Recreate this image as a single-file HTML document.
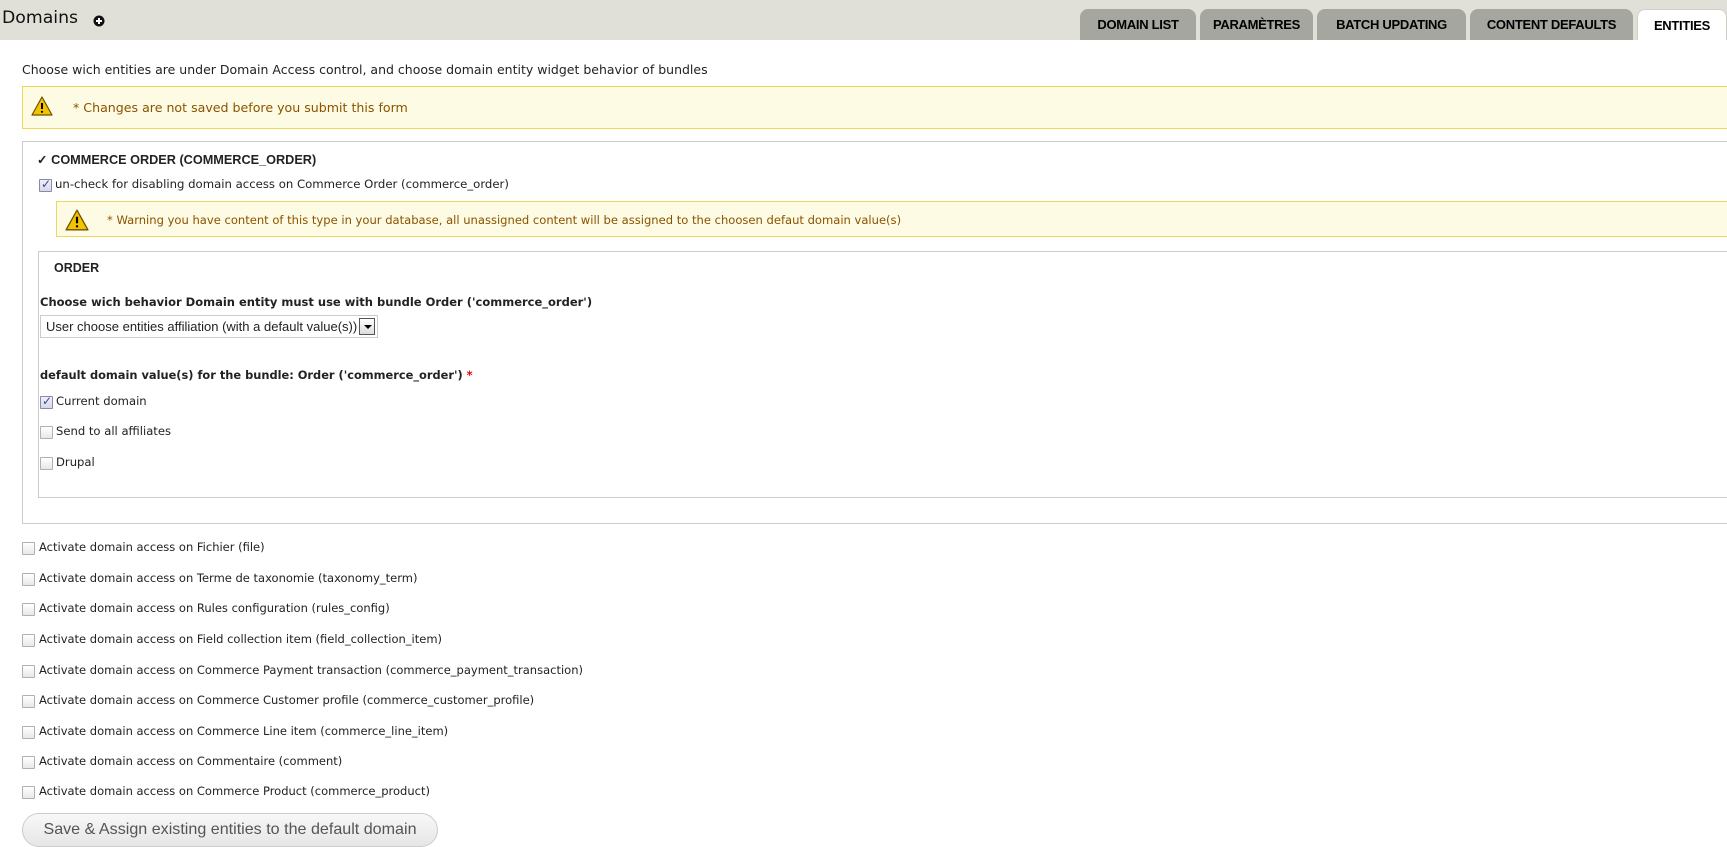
<!DOCTYPE html>
<html><head><meta charset="utf-8"><style>
*{box-sizing:border-box;margin:0;padding:0}
body{width:1727px;height:841px;overflow:hidden;background:#fff;font-family:"DejaVu Sans","Liberation Sans",sans-serif;font-size:11.5px;color:#222;position:relative}
.a{position:absolute;white-space:nowrap}
.hdr{position:absolute;left:0;top:0;width:1727px;height:40px;background:#e0e0d8}
.tab{position:absolute;top:9px;height:31px;background:#a6a6a0;border-radius:8px 8px 0 0;font-family:"Liberation Sans",sans-serif;font-weight:bold;font-size:13px;color:#000;text-align:center;line-height:32px;letter-spacing:-0.3px}
.tab.on{background:#fff}
.warn{position:absolute;background:#fdfbe3;border:1px solid #ecd85a;color:#8a5300}
.cb{position:absolute;width:13px;height:13px;border:1px solid #b0b0b0;background:linear-gradient(#fff,#e8e8e8);border-radius:1px}
.cb.ck{border-color:#8a8aa8;background:linear-gradient(#eef,#d6d9e8)}
.cb.ck::after{content:"✓";position:absolute;left:1px;top:-3px;font-size:12px;color:#3a4a8a;font-weight:bold}
</style></head><body>
<div class="hdr"></div>
<div class="a" style="left:2px;top:8px;font-size:17.3px;font-family:'DejaVu Sans',sans-serif;color:#111">Domains</div>
<svg class="a" style="left:93px;top:15px" width="12" height="12" viewBox="0 0 12 12"><circle cx="6" cy="6" r="5.5" fill="#111"/><path d="M6 3v6M3 6h6" stroke="#fff" stroke-width="2"/></svg>
<div class="tab" style="left:1080px;width:116px">DOMAIN LIST</div>
<div class="tab" style="left:1200px;width:113px">PARAMÈTRES</div>
<div class="tab" style="left:1317px;width:149px">BATCH UPDATING</div>
<div class="tab" style="left:1470px;width:163px">CONTENT DEFAULTS</div>
<div class="tab on" style="left:1637px;width:90px;border:1px solid #d0d0c8;border-bottom:none">ENTITIES</div>

<div class="a" style="left:22px;top:62px;font-size:12.5px">Choose wich entities are under Domain Access control, and choose domain entity widget behavior of bundles</div>

<div class="warn" style="left:22px;top:86px;width:1710px;height:43px"></div>
<svg class="a" style="left:31px;top:96px" width="22" height="20" viewBox="0 0 22 20"><path d="M11 1L21 19H1Z" fill="#f3c300" stroke="#6a5200" stroke-width="1.2" stroke-linejoin="round"/><path d="M11 7v6" stroke="#000" stroke-width="2"/><circle cx="11" cy="15.8" r="1.1"/></svg>
<div class="a" style="left:73px;top:100px;color:#8a5300;font-size:12.6px">* Changes are not saved before you submit this form</div>

<div class="a" style="left:22px;top:141px;width:1710px;height:383px;border:1px solid #ccc"></div>
<div class="a" style="left:37px;top:152px;font-weight:bold;font-family:'Liberation Sans',sans-serif;font-size:12.7px">✓ COMMERCE ORDER (COMMERCE_ORDER)</div>
<div class="cb ck" style="left:39px;top:179px"></div>
<div class="a" style="left:55px;top:177px;font-size:11.7px">un-check for disabling domain access on Commerce Order (commerce_order)</div>

<div class="warn" style="left:56px;top:201px;width:1680px;height:36px"></div>
<svg class="a" style="left:65px;top:209px" width="24" height="22" viewBox="0 0 22 20"><path d="M11 1L21 19H1Z" fill="#f3c300" stroke="#6a5200" stroke-width="1.2" stroke-linejoin="round"/><path d="M11 7v6" stroke="#000" stroke-width="2"/><circle cx="11" cy="15.8" r="1.1"/></svg>
<div class="a" style="left:107px;top:213px;font-size:11.55px;color:#8a5300">* Warning you have content of this type in your database, all unassigned content will be assigned to the choosen defaut domain value(s)</div>

<div class="a" style="left:38px;top:251px;width:1700px;height:247px;border:1px solid #ccc"></div>
<div class="a" style="left:54px;top:261px;font-weight:bold;font-family:'Liberation Sans',sans-serif;font-size:12.5px">ORDER</div>
<div class="a" style="left:40px;top:295px;font-weight:bold;font-size:11.5px">Choose wich behavior Domain entity must use with bundle Order ('commerce_order')</div>
<div class="a" style="left:40px;top:315px;width:338px;height:23px;border:1px solid #ccc;background:#fff"></div>
<div class="a" style="left:46px;top:319px;font-family:'Liberation Sans',sans-serif;font-size:13px">User choose entities affiliation (with a default value(s))</div>
<div class="a" style="left:359px;top:318px;width:16px;height:17px;border:1px solid #555;background:linear-gradient(#fff,#ddd)"></div>
<div class="a" style="left:364px;top:325px;width:0;height:0;border-left:4px solid transparent;border-right:4px solid transparent;border-top:4px solid #000"></div>
<div class="a" style="left:40px;top:368px;font-weight:bold;font-size:11.4px">default domain value(s) for the bundle: Order ('commerce_order') <span style="color:#e00">*</span></div>
<div class="cb ck" style="left:40px;top:396px"></div><div class="a" style="left:56px;top:394px;font-size:11.6px">Current domain</div>
<div class="cb" style="left:40px;top:426px"></div><div class="a" style="left:56px;top:424px;font-size:11.6px">Send to all affiliates</div>
<div class="cb" style="left:40px;top:457px"></div><div class="a" style="left:56px;top:455px;font-size:11.6px">Drupal</div>

<div class="cb" style="left:22px;top:542px"></div><div class="a" style="left:39px;top:540px">Activate domain access on Fichier (file)</div>
<div class="cb" style="left:22px;top:573px"></div><div class="a" style="left:39px;top:571px">Activate domain access on Terme de taxonomie (taxonomy_term)</div>
<div class="cb" style="left:22px;top:603px"></div><div class="a" style="left:39px;top:601px">Activate domain access on Rules configuration (rules_config)</div>
<div class="cb" style="left:22px;top:634px"></div><div class="a" style="left:39px;top:632px">Activate domain access on Field collection item (field_collection_item)</div>
<div class="cb" style="left:22px;top:665px"></div><div class="a" style="left:39px;top:663px">Activate domain access on Commerce Payment transaction (commerce_payment_transaction)</div>
<div class="cb" style="left:22px;top:695px"></div><div class="a" style="left:39px;top:693px">Activate domain access on Commerce Customer profile (commerce_customer_profile)</div>
<div class="cb" style="left:22px;top:726px"></div><div class="a" style="left:39px;top:724px">Activate domain access on Commerce Line item (commerce_line_item)</div>
<div class="cb" style="left:22px;top:756px"></div><div class="a" style="left:39px;top:754px">Activate domain access on Commentaire (comment)</div>
<div class="cb" style="left:22px;top:786px"></div><div class="a" style="left:39px;top:784px">Activate domain access on Commerce Product (commerce_product)</div>

<div class="a" style="left:22px;top:813px;width:416px;height:34px;border:1px solid #ccc;border-radius:17px;background:linear-gradient(#f8f8f8,#e6e6e6);color:#555;font-family:'Liberation Sans',sans-serif;font-size:16.1px;text-align:center;line-height:30px">Save &amp; Assign existing entities to the default domain</div>
</body></html>
